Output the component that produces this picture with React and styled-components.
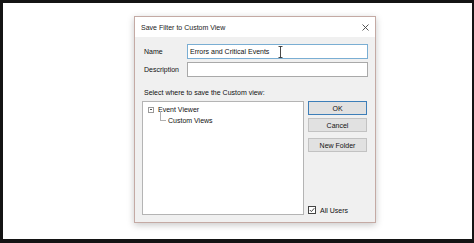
import React from 'react';
import styled, { createGlobalStyle } from 'styled-components';

const GlobalStyle = createGlobalStyle`
  html, body {
    margin: 0;
    padding: 0;
    background: #141414;
  }
  body {
    font-family: 'Liberation Sans', Arial, sans-serif;
  }
`;

const Frame = styled.div`
  width: 474px;
  height: 243px;
  box-sizing: border-box;
  padding: 3px 2px 4px 3px;
  background: #141414;
`;

const Canvas = styled.div`
  height: 100%;
  background: #ffffff;
  box-sizing: border-box;
  padding: 13px 0 0 131px;
`;

const Dialog = styled.div`
  width: 242px;
  height: 207px;
  box-sizing: border-box;
  border: 1px solid #c4aaa4;
  background: #f0f0f0;
  box-shadow: 0 2px 7px rgba(0, 0, 0, 0.22);
  display: flex;
  flex-direction: column;
  font-size: 7px;
  color: #111;
`;

const TitleBar = styled.div`
  height: 20px;
  flex: none;
  background: #ffffff;
  display: flex;
  align-items: center;
  justify-content: space-between;
  padding: 0 6px 0 6px;
`;

const Title = styled.span`
  font-size: 7px;
  color: #222;
`;

const Body = styled.div`
  flex: 1;
  display: flex;
  flex-direction: column;
  padding: 7px 7px 7px 7px;
  min-height: 0;
`;

const FieldRow = styled.div`
  display: flex;
  align-items: center;
  margin-bottom: 3px;
  padding-left: 2px;
`;

const Label = styled.label`
  width: 43px;
  flex: none;
`;

const InputBox = styled.div`
  position: relative;
  width: 181px;
  height: 15px;
  box-sizing: border-box;
  background: #ffffff;
  border: 1px solid ${({ $focused }) => ($focused ? '#7aaed3' : '#a9a9a9')};
  display: flex;
  align-items: center;
  padding-left: 2px;
`;

const Cursor = styled.svg`
  position: absolute;
  left: 90px;
  top: 1px;
`;

const SectionLabel = styled.div`
  margin: 9px 0 5px 2px;
`;

const Main = styled.div`
  flex: 1;
  display: flex;
  gap: 4px;
  min-height: 0;
`;

const TreeBox = styled.div`
  width: 162px;
  box-sizing: border-box;
  background: #ffffff;
  border: 1px solid #b4b4b4;
  padding: 2px 0 0 5px;
`;

const TreeRow = styled.div`
  display: flex;
  align-items: center;
  height: 11px;
  padding-left: ${({ $depth }) => $depth * 16}px;
`;

const Expander = styled.span`
  width: 6px;
  height: 6px;
  box-sizing: border-box;
  border: 1px solid #9a9a9a;
  position: relative;
  margin-right: 4px;
  &::after {
    content: '';
    position: absolute;
    left: 1px;
    top: 1.5px;
    width: 2px;
    height: 1px;
    background: #555;
  }
`;

const Elbow = styled.span`
  width: 5px;
  height: 9px;
  margin: -9px 2px 0 -4px;
  border-left: 1px solid #b0b0b0;
  border-bottom: 1px solid #b0b0b0;
`;

const Side = styled.div`
  width: 59px;
  display: flex;
  flex-direction: column;
  padding-bottom: 1px;
`;

const Button = styled.button`
  height: 14px;
  width: 59px;
  box-sizing: border-box;
  padding: 0;
  margin-bottom: ${({ $gap }) => $gap}px;
  background: #e1e1e1;
  border: 1px solid ${({ $primary }) => ($primary ? '#3d7eb8' : '#c2c2c2')};
  font-family: inherit;
  font-size: 7px;
  color: #111;
`;

const CheckRow = styled.label`
  margin-top: auto;
  display: flex;
  align-items: center;
  gap: 4px;
`;

const CheckBox = styled.span`
  width: 8px;
  height: 8px;
  box-sizing: border-box;
  border: 1px solid #444;
  background: #fff;
  display: flex;
  align-items: center;
  justify-content: center;
`;

export default function App() {
  return (
    <>
      <GlobalStyle />
      <Frame>
        <Canvas>
          <Dialog>
            <TitleBar>
              <Title>Save Filter to Custom View</Title>
              <svg width="7" height="7" viewBox="0 0 7 7">
                <path d="M0.5 0.5 L6.5 6.5 M6.5 0.5 L0.5 6.5" stroke="#444" strokeWidth="0.9" />
              </svg>
            </TitleBar>
            <Body>
              <FieldRow>
                <Label>Name</Label>
                <InputBox $focused>
                  Errors and Critical Events
                  <Cursor width="5" height="12" viewBox="0 0 5 12">
                    <path d="M0.5 0.5 H4.5 M2.5 0.5 V11.5 M0.5 11.5 H4.5" stroke="#333" strokeWidth="0.9" fill="none" />
                  </Cursor>
                </InputBox>
              </FieldRow>
              <FieldRow>
                <Label>Description</Label>
                <InputBox />
              </FieldRow>
              <SectionLabel>Select where to save the Custom view:</SectionLabel>
              <Main>
                <TreeBox>
                  <TreeRow $depth={0}>
                    <Expander />
                    Event Viewer
                  </TreeRow>
                  <TreeRow $depth={1}>
                    <Elbow />
                    Custom Views
                  </TreeRow>
                </TreeBox>
                <Side>
                  <Button $primary $gap={3}>OK</Button>
                  <Button $gap={6}>Cancel</Button>
                  <Button $gap={0}>New Folder</Button>
                  <CheckRow>
                    <CheckBox>
                      <svg width="6" height="6" viewBox="0 0 6 6">
                        <path d="M0.8 3 L2.4 4.6 L5.3 1.2" stroke="#333" strokeWidth="0.9" fill="none" />
                      </svg>
                    </CheckBox>
                    All Users
                  </CheckRow>
                </Side>
              </Main>
            </Body>
          </Dialog>
        </Canvas>
      </Frame>
    </>
  );
}
